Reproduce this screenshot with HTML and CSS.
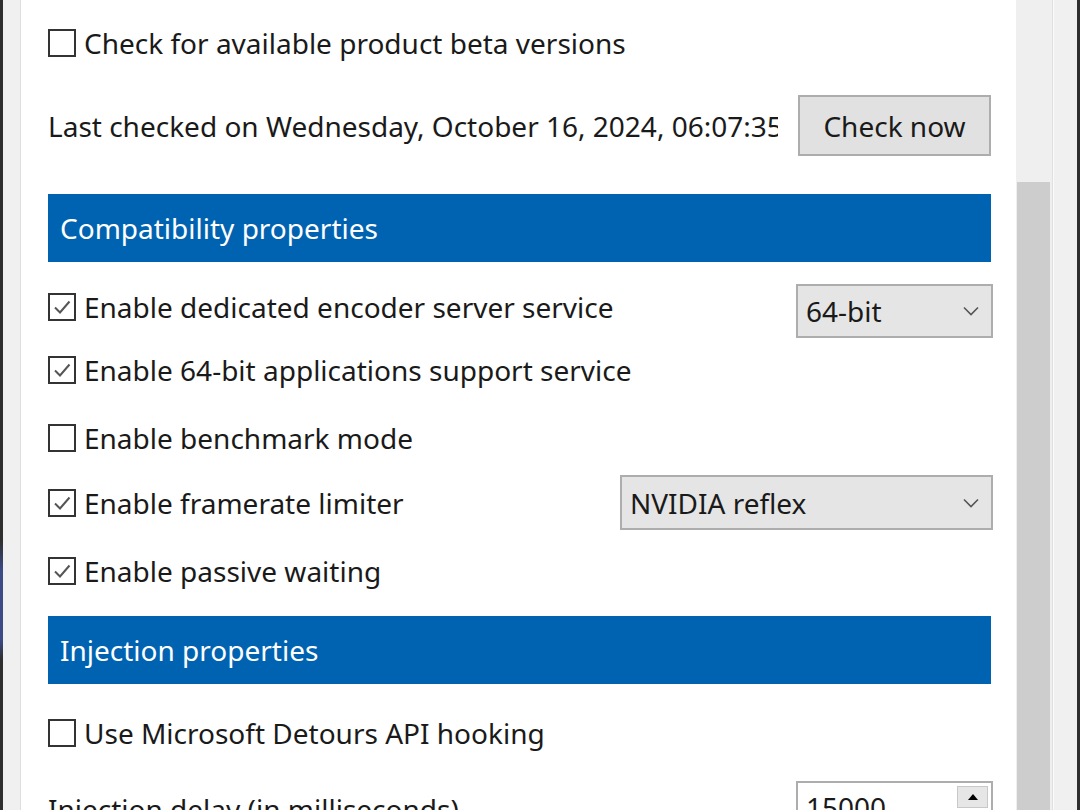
FILE: index.html
```html
<!DOCTYPE html>
<html>
<head>
<meta charset="utf-8">
<link rel="stylesheet" href="styles.css">
</head>
<body>
<div class="window">
  <div class="frame-left"><div class="edge"></div><div class="strip"></div></div>
  <div class="content">
    <div class="row r1">
      <label class="check"><span class="box"></span><span class="lbl">Check for available product beta versions</span></label>
    </div>
    <div class="row r2">
      <div class="last">Last checked on Wednesday, October 16, 2024, 06:07:35</div>
      <button class="btn">Check now</button>
    </div>
    <div class="header h1">Compatibility properties</div>
    <div class="row r-enc">
      <label class="check top"><span class="box checked"><svg viewBox="0 0 24 24"><polyline points="5,12.5 10,17.5 19.5,6.5"/></svg></span><span class="lbl">Enable dedicated encoder server service</span></label>
      <div class="select sel-bit"><span>64-bit</span><svg class="chev" viewBox="0 0 16 10"><polyline points="1,1.5 8,8.5 15,1.5"/></svg></div>
    </div>
    <div class="row r-64">
      <label class="check"><span class="box checked"><svg viewBox="0 0 24 24"><polyline points="5,12.5 10,17.5 19.5,6.5"/></svg></span><span class="lbl">Enable 64-bit applications support service</span></label>
    </div>
    <div class="row r-bench">
      <label class="check"><span class="box"></span><span class="lbl">Enable benchmark mode</span></label>
    </div>
    <div class="row r-frame">
      <label class="check"><span class="box checked"><svg viewBox="0 0 24 24"><polyline points="5,12.5 10,17.5 19.5,6.5"/></svg></span><span class="lbl">Enable framerate limiter</span></label>
      <div class="select sel-nv"><span>NVIDIA reflex</span><svg class="chev" viewBox="0 0 16 10"><polyline points="1,1.5 8,8.5 15,1.5"/></svg></div>
    </div>
    <div class="row r-passive">
      <label class="check"><span class="box checked"><svg viewBox="0 0 24 24"><polyline points="5,12.5 10,17.5 19.5,6.5"/></svg></span><span class="lbl">Enable passive waiting</span></label>
    </div>
    <div class="header h2">Injection properties</div>
    <div class="row r-detours">
      <label class="check"><span class="box"></span><span class="lbl">Use Microsoft Detours API hooking</span></label>
    </div>
    <div class="row r-delay">
      <span class="plain">Injection delay (in milliseconds)</span>
      <div class="spin"><span>15000</span><div class="spin-btns"><div class="sb up"><svg viewBox="0 0 10 6"><polygon points="0,6 5,0 10,6"/></svg></div><div class="sb down"><svg viewBox="0 0 10 6"><polygon points="0,0 5,6 10,0"/></svg></div></div></div>
    </div>
  </div>
  <div class="scrollbar"><div class="thumb"></div></div>
  <div class="frame-right"><div class="rline"></div><div class="rstrip"></div><div class="redge"></div></div>
</div>
</body>
</html>
```
FILE: styles.css
```css
html, body {
  margin: 0;
  padding: 0;
  background: #fff;
}
.window {
  display: flex;
  width: 1080px;
  height: 810px;
  overflow: hidden;
  font-family: "Noto Sans", "Open Sans", sans-serif;
  font-size: 28px;
  color: #1a1a1a;
}
.frame-left {
  display: flex;
  width: 21px;
  flex: none;
}
.edge {
  width: 3px;
  background: linear-gradient(#2e2e2e 0, #2e2e2e 540px, #3c4a86 570px, #3c4a86 640px, #2e2e2e 660px);
}
.strip {
  width: 17px;
  background: #f0f0f0;
  border-right: 1px solid #dedede;
}
.content {
  flex: none;
  width: 995px;
  box-sizing: border-box;
  background: #fff;
  padding: 29px 23px 0 27px;
  overflow: hidden;
}
.row {
  display: flex;
  align-items: center;
}
.check {
  display: flex;
  align-items: center;
  gap: 8px;
  white-space: nowrap;
}
.check.top {
  align-self: flex-start;
  margin-top: 9px;
}
.box {
  width: 24px;
  height: 24px;
  border: 2px solid #333;
  background: #fff;
  flex: none;
  display: flex;
}
.box svg {
  width: 24px;
  height: 24px;
  fill: none;
  stroke: #555;
  stroke-width: 2;
}
.lbl {
  line-height: 28px;
}
.r1 { height: 28px; }
.r2 {
  margin-top: 38px;
  height: 61px;
}
.last {
  flex: 1;
  min-width: 0;
  overflow: hidden;
  white-space: nowrap;
  margin-right: 20px;
}
.btn {
  flex: none;
  width: 193px;
  height: 61px;
  margin-right: 2px;
  background: #e1e1e1;
  border: 2px solid #adadad;
  font: inherit;
  color: inherit;
  padding: 0;
}
.header {
  height: 68px;
  margin-right: 2px;
  background: #0063b1;
  color: #fff;
  display: flex;
  align-items: center;
  padding-left: 12px;
  box-sizing: border-box;
}
.h1 { margin-top: 38px; }
.h2 { margin-top: 31px; }
.r-enc {
  margin-top: 22px;
  height: 54px;
  align-items: flex-start;
  justify-content: space-between;
}
.select {
  box-sizing: border-box;
  background: #e5e5e5;
  border: 2px solid #adadad;
  display: flex;
  align-items: center;
  justify-content: space-between;
  padding: 0 12px 0 8px;
  white-space: nowrap;
  flex: none;
}
.sel-bit {
  width: 197px;
  height: 54px;
}
.sel-nv {
  width: 373px;
  height: 55px;
}
.chev {
  width: 16px;
  height: 10px;
  fill: none;
  stroke: #555;
  stroke-width: 1.6;
}
.r-64 { margin-top: 18px; height: 28px; }
.r-bench { margin-top: 40px; height: 28px; }
.r-frame {
  margin-top: 23px;
  height: 55px;
  justify-content: space-between;
}
.r-passive { margin-top: 27px; height: 28px; }
.r-detours { margin-top: 35px; height: 28px; }
.r-delay {
  margin-top: 34px;
  height: 55px;
  justify-content: space-between;
}
.plain { white-space: nowrap; }
.spin {
  flex: none;
  box-sizing: border-box;
  width: 197px;
  height: 55px;
  background: #fff;
  border: 2px solid #adadad;
  display: flex;
  justify-content: space-between;
  padding: 0 3px 0 8px;
  align-items: flex-start;
  line-height: 48px;
}
.spin-btns {
  display: flex;
  flex-direction: column;
  gap: 2px;
  margin-top: 3px;
}
.sb {
  width: 31px;
  height: 22px;
  background: #e6e6e6;
  border: 1px solid #c8c8c8;
  box-sizing: border-box;
  display: flex;
  align-items: center;
  justify-content: center;
}
.sb svg {
  width: 10px;
  height: 6px;
  fill: #000;
}
.scrollbar {
  width: 36px;
  flex: none;
  background: #efefef;
  padding-top: 182px;
  box-sizing: border-box;
}
.thumb {
  margin-left: 1px;
  width: 33px;
  height: 700px;
  background: #cdcdcd;
}
.frame-right {
  width: 28px;
  flex: none;
  display: flex;
}
.rline {
  width: 1px;
  background: #e0e0e0;
}
.rstrip {
  flex: 1;
  background: #f0f0f0;
  border-left: 1px solid #fafafa;
}
.redge {
  width: 3px;
  background: #2e2e2e;
}
```
